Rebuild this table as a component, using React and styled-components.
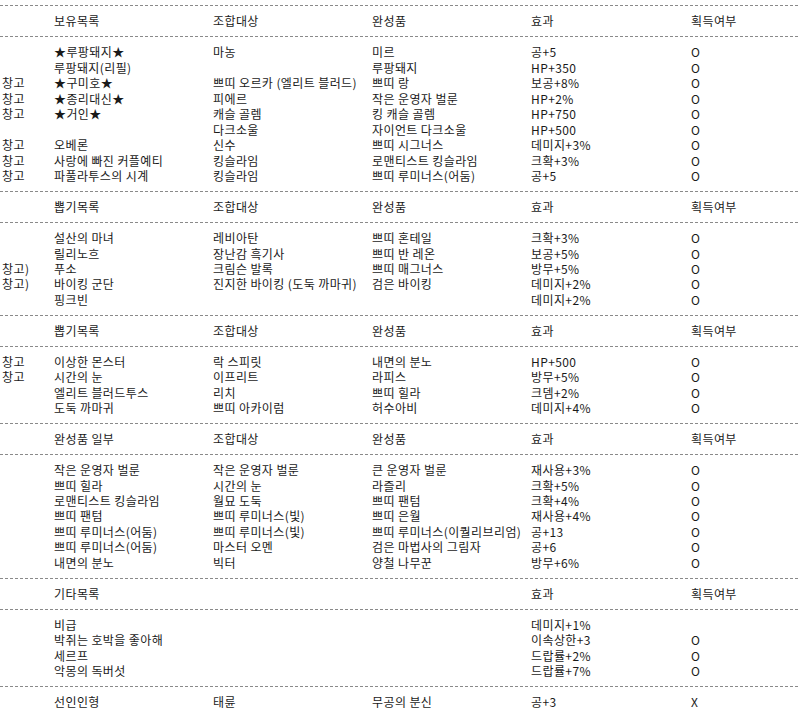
import React from 'react';
import styled, { createGlobalStyle } from 'styled-components';

const GlobalStyle = createGlobalStyle`
  body {
    margin: 0;
    background: #ffffff;
    font-family: "Noto Sans CJK KR", "Noto Sans", sans-serif;
  }
`;

const Sheet = styled.div`
  margin-top: -2px;
  font-size: 12px;
  line-height: 15.47px;
  letter-spacing: 0.4px;
  color: #1a1a1a;
`;

const Dash = styled.div`
  height: 15.47px;
  display: flex;
  align-items: center;
  &::after {
    content: '';
    flex: 1;
    height: 1px;
    background: repeating-linear-gradient(90deg, #8a8a8a 0 3px, transparent 3px 5px);
  }
`;

const Row = styled.div`
  display: grid;
  grid-template-columns: 52px 159px 159px 159px 160px 1fr;
  padding-left: 2px;
  height: 15.47px;
`;

const Cell = styled.div`
  white-space: nowrap;
`;

const HEAD_OWN = ['', '보유목록', '조합대상', '완성품', '효과', '획득여부'];
const HEAD_DRAW = ['', '뽑기목록', '조합대상', '완성품', '효과', '획득여부'];
const HEAD_PART = ['', '완성품 일부', '조합대상', '완성품', '효과', '획득여부'];
const HEAD_ETC = ['', '기타목록', '', '', '효과', '획득여부'];

const sections = [
  {
    head: HEAD_OWN,
    rows: [
      ['', '★루팡돼지★', '마농', '미르', '공+5', 'O'],
      ['', '루팡돼지(리필)', '', '루팡돼지', 'HP+350', 'O'],
      ['창고', '★구미호★', '쁘띠 오르카 (엘리트 블러드)', '쁘띠 랑', '보공+8%', 'O'],
      ['창고', '★종리대신★', '피에르', '작은 운영자 벌룬', 'HP+2%', 'O'],
      ['창고', '★거인★', '캐슬 골렘', '킹 캐슬 골렘', 'HP+750', 'O'],
      ['', '', '다크소울', '자이언트 다크소울', 'HP+500', 'O'],
      ['창고', '오베론', '신수', '쁘띠 시그너스', '데미지+3%', 'O'],
      ['창고', '사랑에 빠진 커플예티', '킹슬라임', '로맨티스트 킹슬라임', '크확+3%', 'O'],
      ['창고', '파풀라투스의 시계', '킹슬라임', '쁘띠 루미너스(어둠)', '공+5', 'O'],
    ],
  },
  {
    head: HEAD_DRAW,
    rows: [
      ['', '설산의 마녀', '레비아탄', '쁘띠 혼테일', '크확+3%', 'O'],
      ['', '릴리노흐', '장난감 흑기사', '쁘띠 반 레온', '보공+5%', 'O'],
      ['창고)', '푸소', '크림슨 발록', '쁘띠 매그너스', '방무+5%', 'O'],
      ['창고)', '바이킹 군단', '진지한 바이킹 (도둑 까마귀)', '검은 바이킹', '데미지+2%', 'O'],
      ['', '핑크빈', '', '', '데미지+2%', 'O'],
    ],
  },
  {
    head: HEAD_DRAW,
    rows: [
      ['창고', '이상한 몬스터', '락 스피릿', '내면의 분노', 'HP+500', 'O'],
      ['창고', '시간의 눈', '이프리트', '라피스', '방무+5%', 'O'],
      ['', '엘리트 블러드투스', '리치', '쁘띠 힐라', '크뎀+2%', 'O'],
      ['', '도둑 까마귀', '쁘띠 아카이럼', '허수아비', '데미지+4%', 'O'],
    ],
  },
  {
    head: HEAD_PART,
    rows: [
      ['', '작은 운영자 벌룬', '작은 운영자 벌룬', '큰 운영자 벌룬', '재사용+3%', 'O'],
      ['', '쁘띠 힐라', '시간의 눈', '라즐리', '크확+5%', 'O'],
      ['', '로맨티스트 킹슬라임', '월묘 도둑', '쁘띠 팬텀', '크확+4%', 'O'],
      ['', '쁘띠 팬텀', '쁘띠 루미너스(빛)', '쁘띠 은월', '재사용+4%', 'O'],
      ['', '쁘띠 루미너스(어둠)', '쁘띠 루미너스(빛)', '쁘띠 루미너스(이퀄리브리엄)', '공+13', 'O'],
      ['', '쁘띠 루미너스(어둠)', '마스터 오멘', '검은 마법사의 그림자', '공+6', 'O'],
      ['', '내면의 분노', '빅터', '양철 나무꾼', '방무+6%', 'O'],
    ],
  },
  {
    head: HEAD_ETC,
    rows: [
      ['', '비급', '', '', '데미지+1%', ''],
      ['', '박쥐는 호박을 좋아해', '', '', '이속상한+3', 'O'],
      ['', '세르프', '', '', '드랍률+2%', 'O'],
      ['', '악몽의 독버섯', '', '', '드랍률+7%', 'O'],
    ],
  },
];

const lastRow = ['', '선인인형', '태륜', '무공의 분신', '공+3', 'X'];

function Line({ cells }) {
  return (
    <Row>
      {cells.map((text, i) => (
        // eslint-disable-next-line react/no-array-index-key
        <Cell key={i}>{text}</Cell>
      ))}
    </Row>
  );
}

export default function App() {
  return (
    <>
      <GlobalStyle />
      <Sheet>
        {sections.map((section, s) => (
          // eslint-disable-next-line react/no-array-index-key
          <React.Fragment key={s}>
            <Dash />
            <Line cells={section.head} />
            <Dash />
            {section.rows.map((cells, r) => (
              // eslint-disable-next-line react/no-array-index-key
              <Line key={r} cells={cells} />
            ))}
          </React.Fragment>
        ))}
        <Dash />
        <Line cells={lastRow} />
      </Sheet>
    </>
  );
}
